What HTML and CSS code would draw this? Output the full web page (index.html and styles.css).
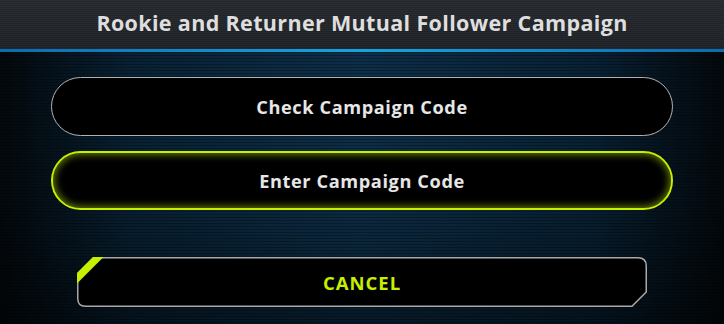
FILE: index.html
```html
<!DOCTYPE html>
<html>
<head>
<meta charset="utf-8">
<link rel="stylesheet" href="styles.css">
</head>
<body>
<div class="screen">
  <header class="header">
    <h1 class="title">Rookie and Returner Mutual Follower Campaign</h1>
  </header>
  <div class="accent"></div>
  <main class="content">
    <button class="pill">Check Campaign Code</button>
    <button class="pill pill-active">Enter Campaign Code</button>
    <button class="cancel">
      <svg class="cancel-frame" width="570" height="50" viewBox="0 0 570 50">
        <path d="M16.5 0.75 L561 0.75 Q569.25 0.75 569.25 9 L569.25 35 L555 49.25 L8.5 49.25 Q0.75 49.25 0.75 41.5 L0.75 16.5 Z" fill="#000" stroke="#a9a9a9" stroke-width="1.5"/>
        <polygon points="16,0 26.5,0 0,26.5 0,16" fill="#c6f000"/>
      </svg>
      <span class="cancel-label">CANCEL</span>
    </button>
  </main>
</div>
</body>
</html>
```

FILE: styles.css
```css
html, body {
  margin: 0;
  padding: 0;
  background: #000;
}

.screen {
  width: 724px;
  height: 324px;
  overflow: hidden;
  display: flex;
  flex-direction: column;
  font-family: "Open Sans", "Noto Sans", sans-serif;
}

.header {
  height: 49px;
  flex: none;
  display: flex;
  align-items: center;
  justify-content: center;
  background:
    repeating-linear-gradient(to bottom, rgba(255,255,255,0.025) 0 1px, rgba(0,0,0,0.06) 1px 2px),
    linear-gradient(to bottom, #262a2f, #1f2327);
}

.title {
  margin: 0 0 4px 0;
  font-size: 21.5px;
  font-weight: 700;
  color: #dedede;
  letter-spacing: 0.35px;
}

.accent {
  height: 3px;
  flex: none;
  background: linear-gradient(to right, #0b6cb0, #17a3e0 50%, #0b6cb0);
}

.content {
  flex: 1;
  display: flex;
  flex-direction: column;
  align-items: center;
  padding-top: 25px;
  background:
    repeating-linear-gradient(to bottom, rgba(0,0,0,0.3) 0 1px, rgba(0,0,0,0) 1px 3px),
    linear-gradient(to right, #03080c 0%, #082134 18%, #0d2e48 50%, #082134 82%, #03080c 100%);
  position: relative;
}

.content::after {
  content: "";
  position: absolute;
  inset: 0;
  background: linear-gradient(to bottom, rgba(0,0,0,0) 0%, rgba(0,0,0,0.05) 55%, rgba(0,0,0,0.45) 100%);
  pointer-events: none;
}

.pill {
  width: 622px;
  height: 59px;
  box-sizing: border-box;
  border-radius: 30px;
  background: #000;
  border: 1.5px solid #b3b3b3;
  color: #e6e6e6;
  font-family: "Open Sans", "Noto Sans", sans-serif;
  font-size: 18.2px;
  font-weight: 700;
  letter-spacing: 0.6px;
  padding: 0;
  position: relative;
  z-index: 1;
}

.pill + .pill {
  margin-top: 15px;
}

.pill-active {
  border: 2.5px solid #c6f000;
  box-shadow: inset 0 0 7px 2px rgba(170, 210, 0, 0.55);
}

.cancel {
  margin-top: 47px;
  width: 570px;
  height: 50px;
  padding: 0;
  border: none;
  background: transparent;
  position: relative;
  z-index: 1;
  display: flex;
  align-items: center;
  justify-content: center;
}

.cancel-frame {
  position: absolute;
  left: 0;
  top: 0;
}

.cancel-label {
  position: relative;
  color: #c6f000;
  font-family: "Open Sans", "Noto Sans", sans-serif;
  font-size: 18.5px;
  font-weight: 700;
  letter-spacing: 1px;
}
```
